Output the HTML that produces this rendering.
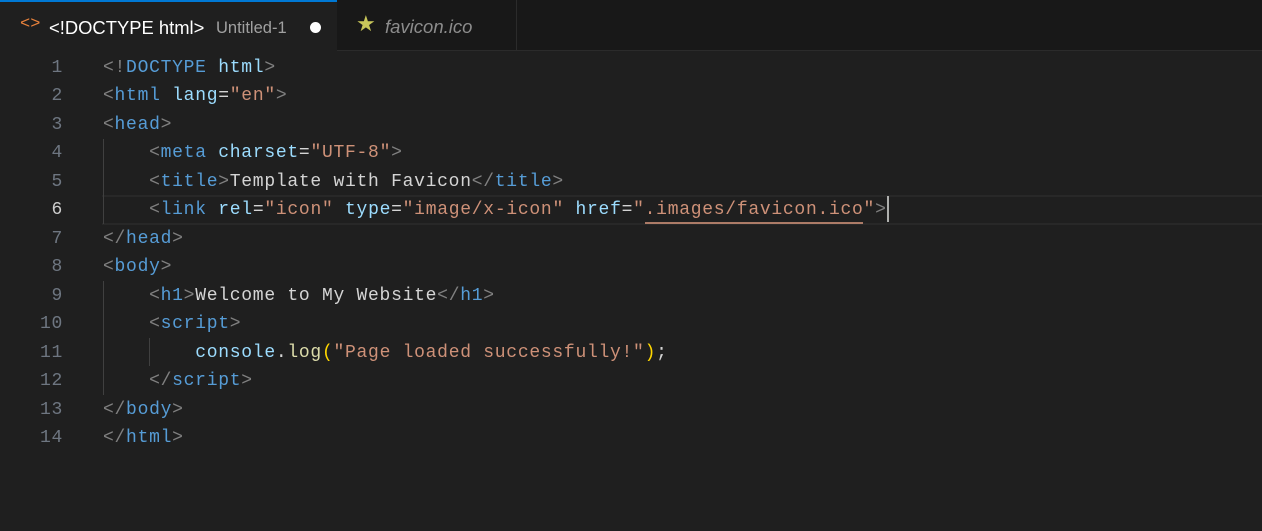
<!DOCTYPE html>
<html><head><style>
body{margin:0;width:1262px;height:531px;background:#1f1f1f;overflow:hidden;font-family:"Liberation Sans",sans-serif;position:relative}
.bar{position:absolute;left:0;top:0;width:1262px;height:51px;background:#181818;border-bottom:1px solid #2b2b2b;box-sizing:border-box}
.t1{position:absolute;left:0;top:0;width:337px;height:52px;background:#1f1f1f;border-top:2px solid #0078d4;box-sizing:border-box}
.t2{position:absolute;left:337px;top:0;width:180px;height:51px;border-right:1px solid #2b2b2b;box-sizing:border-box}
.code{position:absolute;left:0;top:54px;font-family:"Liberation Mono",monospace;font-size:18px;letter-spacing:0.72px;line-height:28.46px;white-space:pre;color:#d4d4d4}
.ln{position:absolute;left:0;width:63px;text-align:right;color:#6e7681}
.ln.a{color:#cccccc}
.l{position:absolute;left:103px}
.b{color:#808080}.n{color:#569cd6}.at{color:#9cdcfe}.s{color:#ce9178}.f{color:#dcdcaa}.p{color:#ffd700}
.g{position:absolute;width:1px;background:#404040}
</style></head><body>
<div class="bar"></div>
<div class="t1">
<span style="position:absolute;left:20px;top:13px;color:#e8823c;font-size:17px;font-family:'Liberation Mono',monospace">&lt;&gt;</span>
<span style="position:absolute;left:49px;top:15px;color:#fff;font-size:18.4px">&lt;!DOCTYPE html&gt;</span>
<span style="position:absolute;left:216px;top:17px;color:#a0a0a0;font-size:16.5px">Untitled-1</span>
<span style="position:absolute;left:310px;top:20px;width:11px;height:11px;border-radius:50%;background:#fff"></span>
</div>
<div class="t2">
<span style="position:absolute;left:19px;top:11px;color:#c9c75a;font-size:22px">★</span>
<span style="position:absolute;left:48px;top:16px;color:#8c8c8c;font-size:18.5px;font-style:italic">favicon.ico</span>
</div>
<div style="position:absolute;left:102px;top:195px;width:1160px;height:26px;border-top:2px solid #282828;border-bottom:2px solid #282828"></div>
<div class="g" style="left:103px;top:139px;height:85px"></div>
<div class="g" style="left:103px;top:281px;height:114px"></div>
<div class="g" style="left:149px;top:338px;height:28px"></div>
<div style="position:absolute;left:887px;top:196px;width:2px;height:26px;background:#aeafad"></div>
<div style="position:absolute;left:645px;top:222px;width:218px;height:2px;background:#ce9178;opacity:.8"></div>
<div class="code">
<div class="ln" style="top:0">1</div><div class="l" style="top:0"><span class="b">&lt;!</span><span class="n">DOCTYPE</span> <span class="at">html</span><span class="b">&gt;</span></div>
<div class="ln" style="top:28.46px">2</div><div class="l" style="top:28.46px"><span class="b">&lt;</span><span class="n">html</span> <span class="at">lang</span>=<span class="s">"en"</span><span class="b">&gt;</span></div>
<div class="ln" style="top:56.92px">3</div><div class="l" style="top:56.92px"><span class="b">&lt;</span><span class="n">head</span><span class="b">&gt;</span></div>
<div class="ln" style="top:85.38px">4</div><div class="l" style="top:85.38px">    <span class="b">&lt;</span><span class="n">meta</span> <span class="at">charset</span>=<span class="s">"UTF-8"</span><span class="b">&gt;</span></div>
<div class="ln" style="top:113.84px">5</div><div class="l" style="top:113.84px">    <span class="b">&lt;</span><span class="n">title</span><span class="b">&gt;</span>Template with Favicon<span class="b">&lt;/</span><span class="n">title</span><span class="b">&gt;</span></div>
<div class="ln a" style="top:142.3px">6</div><div class="l" style="top:142.3px">    <span class="b">&lt;</span><span class="n">link</span> <span class="at">rel</span>=<span class="s">"icon"</span> <span class="at">type</span>=<span class="s">"image/x-icon"</span> <span class="at">href</span>=<span class="s">".images/favicon.ico"</span><span class="b">&gt;</span></div>
<div class="ln" style="top:170.76px">7</div><div class="l" style="top:170.76px"><span class="b">&lt;/</span><span class="n">head</span><span class="b">&gt;</span></div>
<div class="ln" style="top:199.22px">8</div><div class="l" style="top:199.22px"><span class="b">&lt;</span><span class="n">body</span><span class="b">&gt;</span></div>
<div class="ln" style="top:227.68px">9</div><div class="l" style="top:227.68px">    <span class="b">&lt;</span><span class="n">h1</span><span class="b">&gt;</span>Welcome to My Website<span class="b">&lt;/</span><span class="n">h1</span><span class="b">&gt;</span></div>
<div class="ln" style="top:256.14px">10</div><div class="l" style="top:256.14px">    <span class="b">&lt;</span><span class="n">script</span><span class="b">&gt;</span></div>
<div class="ln" style="top:284.6px">11</div><div class="l" style="top:284.6px">        <span class="at">console</span>.<span class="f">log</span><span class="p">(</span><span class="s">"Page loaded successfully!"</span><span class="p">)</span>;</div>
<div class="ln" style="top:313.06px">12</div><div class="l" style="top:313.06px">    <span class="b">&lt;/</span><span class="n">script</span><span class="b">&gt;</span></div>
<div class="ln" style="top:341.52px">13</div><div class="l" style="top:341.52px"><span class="b">&lt;/</span><span class="n">body</span><span class="b">&gt;</span></div>
<div class="ln" style="top:369.98px">14</div><div class="l" style="top:369.98px"><span class="b">&lt;/</span><span class="n">html</span><span class="b">&gt;</span></div>
</div>
</body></html>
